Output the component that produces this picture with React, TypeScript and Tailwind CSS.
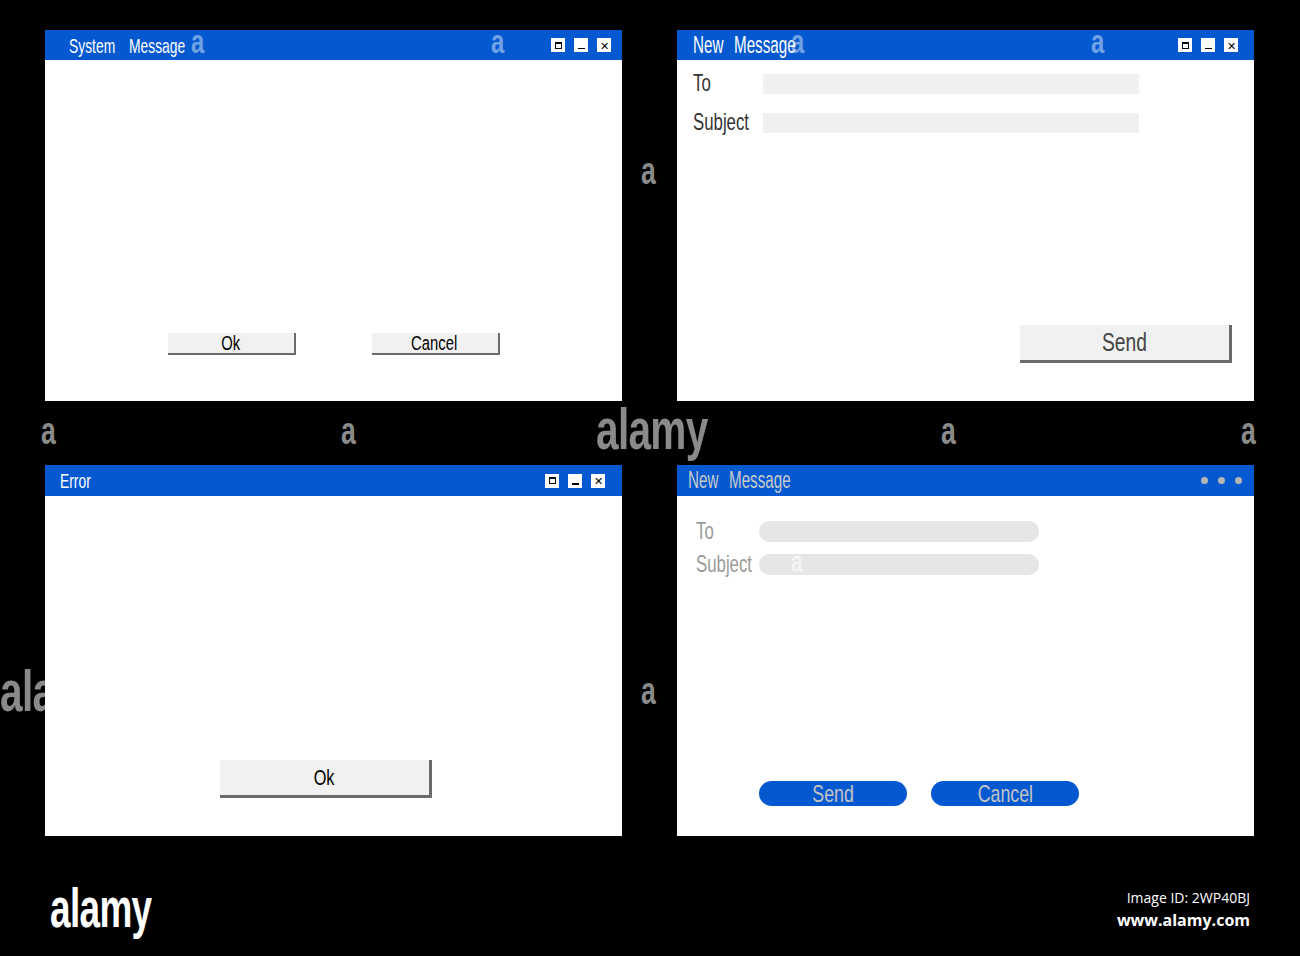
const sans = "font-['Liberation_Sans','Arial',sans-serif]";

// condensed look: Liberation Sans squeezed horizontally
function N({
  children,
  className = "",
  origin = "origin-left",
  scale = "scale-x-[0.74]",
}: {
  children: React.ReactNode;
  className?: string;
  origin?: string;
  scale?: string;
}) {
  return <span className={`inline-block whitespace-pre ${sans} ${scale} ${origin} ${className}`}>{children}</span>;
}

function Title({ first, second, firstW, cls }: { first: string; second?: string; firstW?: string; cls: string }) {
  return (
    <div className="flex">
      <N scale="scale-x-[0.66]" className={`${firstW ?? ""} leading-none ${cls}`}>
        {first}
      </N>
      {second && (
        <N scale="scale-x-[0.66]" className={`leading-none ${cls}`}>
          {second}
        </N>
      )}
    </div>
  );
}

function TitleButtons() {
  return (
    <div className="flex items-center gap-[9px]">
      <span className="flex h-[14px] w-[14px] items-center justify-center bg-white">
        <span className="h-[7px] w-[7px] border-[1.5px] border-t-[2.5px] border-black" />
      </span>
      <span className="flex h-[14px] w-[14px] items-end justify-center bg-white pb-[3px]">
        <span className="h-[1.5px] w-[7px] bg-black" />
      </span>
      <span className="flex h-[14px] w-[14px] items-center justify-center bg-white text-[11px] leading-none text-black">
        ✕
      </span>
    </div>
  );
}

function FlatButton({ label, className, text }: { label: string; className: string; text: string }) {
  return (
    <div className={`flex items-center justify-center bg-[#f1f1f1] border-[#6b6b6b] ${className}`}>
      <N origin="origin-center" className={text}>
        {label}
      </N>
    </div>
  );
}

function Wm({ className, label = "a" }: { className: string; label?: string }) {
  return (
    <span
      className={`pointer-events-none absolute inline-block origin-left scale-x-[0.7] ${sans} font-bold leading-none ${className}`}
    >
      {label}
    </span>
  );
}

function Field({ label, labelW, labelCls, barCls, rowH }: { label: string; labelW: string; labelCls: string; barCls: string; rowH: string }) {
  return (
    <div className={`flex items-center ${rowH}`}>
      <div className={labelW}>
        <N scale="scale-x-[0.7]" className={`leading-none ${labelCls}`}>
          {label}
        </N>
      </div>
      <div className={barCls} />
    </div>
  );
}

export default function App() {
  return (
    <div className="relative h-[956px] w-[1300px] overflow-hidden bg-black">
      <div className="absolute left-0 top-[662px] w-[45px] overflow-hidden">
        <span className={`inline-block origin-left scale-x-[0.7] ${sans} text-[58px] font-bold leading-none tracking-[-1px] text-[#8a8a8a]`}>
          alam
        </span>
      </div>

      <div className="relative grid grid-cols-[577px_577px] gap-x-[55px] gap-y-[64px] pl-[45px] pt-[30px]">
        {/* System Message */}
        <div className="flex h-[371px] flex-col bg-white">
          <div className="flex h-[30px] items-center justify-between bg-[#0459d1] pl-[24px] pr-[11px]">
            <Title first="System" second="Message" firstW="w-[60px]" cls="text-[21px] text-white" />
            <TitleButtons />
          </div>
          <div className="flex flex-1 items-end justify-center gap-[76px] pb-[46px]">
            <FlatButton label="Ok" className="h-[22px] w-[128px] border-r-2 border-b-2" text="text-[20px] text-black" />
            <FlatButton label="Cancel" className="h-[22px] w-[128px] border-r-2 border-b-2" text="text-[20px] text-black" />
          </div>
        </div>

        {/* New Message */}
        <div className="flex h-[371px] flex-col bg-white">
          <div className="flex h-[30px] items-center justify-between bg-[#0459d1] pl-[16px] pr-[16px]">
            <Title first="New" second="Message" firstW="w-[41px]" cls="text-[23px] text-white" />
            <TitleButtons />
          </div>
          <div className="flex flex-1 flex-col pl-[16px] pr-[22px] pt-[14px] pb-[38px]">
            <div className="flex flex-col gap-[19px]">
              <Field label="To" rowH="h-[20px]" labelW="w-[70px]" labelCls="text-[24px] text-[#333]" barCls="h-[20px] w-[376px] bg-[#f0f0f0]" />
              <Field label="Subject" rowH="h-[20px]" labelW="w-[70px]" labelCls="text-[24px] text-[#333]" barCls="h-[20px] w-[376px] bg-[#f0f0f0]" />
            </div>
            <div className="mt-auto flex justify-end">
              <FlatButton label="Send" className="h-[38px] w-[212px] border-r-[3px] border-b-[3px]" text="text-[26px] text-[#444]" />
            </div>
          </div>
        </div>

        {/* Error */}
        <div className="flex h-[371px] flex-col bg-white">
          <div className="flex h-[31px] items-center justify-between bg-[#0459d1] pl-[15px] pr-[17px]">
            <Title first="Error" cls="text-[21px] text-white" />
            <TitleButtons />
          </div>
          <div className="flex flex-1 items-end pb-[38px] pl-[175px]">
            <FlatButton label="Ok" className="h-[38px] w-[212px] border-r-[3px] border-b-[3px]" text="text-[22px] text-black" />
          </div>
        </div>

        {/* New Message (rounded) */}
        <div className="flex h-[371px] flex-col bg-white">
          <div className="flex h-[31px] items-center justify-between bg-[#0459d1] pl-[11px] pr-[12px]">
            <Title first="New" second="Message" firstW="w-[41px]" cls="text-[23px] text-[#c9c9c9]" />
            <div className="flex gap-[10px]">
              <span className="h-[7px] w-[7px] rounded-full bg-[#b5b5b5]" />
              <span className="h-[7px] w-[7px] rounded-full bg-[#b5b5b5]" />
              <span className="h-[7px] w-[7px] rounded-full bg-[#b5b5b5]" />
            </div>
          </div>
          <div className="flex flex-1 flex-col pl-[19px] pt-[25px] pb-[30px]">
            <div className="flex flex-col gap-[12px]">
              <Field label="To" rowH="h-[21px]" labelW="w-[63px]" labelCls="text-[24px] text-[#9a9a9a]" barCls="h-[21px] w-[280px] rounded-full bg-[#e6e6e6]" />
              <Field label="Subject" rowH="h-[21px]" labelW="w-[63px]" labelCls="text-[24px] text-[#9a9a9a]" barCls="h-[21px] w-[280px] rounded-full bg-[#e6e6e6]" />
            </div>
            <div className="mt-auto flex gap-[24px] pl-[63px]">
              <div className="flex h-[25px] w-[148px] items-center justify-center rounded-full bg-[#0459d1]">
                <N origin="origin-center" className="text-[24px] leading-none text-[#c4c4c4]">Send</N>
              </div>
              <div className="flex h-[25px] w-[148px] items-center justify-center rounded-full bg-[#0459d1]">
                <N origin="origin-center" className="text-[24px] leading-none text-[#c4c4c4]">Cancel</N>
              </div>
            </div>
          </div>
        </div>
      </div>

      {/* footer */}
      <div className="flex items-start justify-between pl-[50px] pr-[50px] pt-[44px]">
        <span className={`inline-block origin-left scale-x-[0.66] ${sans} text-[56px] font-bold leading-none tracking-[-1px] text-white`}>
          alamy
        </span>
        <div className="flex flex-col items-end pt-[7px] font-['Open_Sans',sans-serif] text-white">
          <span className="text-[14px] leading-[22px]">Image ID: 2WP40BJ</span>
          <span className="text-[16px] font-bold leading-[22px]">www.alamy.com</span>
        </div>
      </div>

      {/* watermarks */}
      <Wm label="alamy" className="left-[596px] top-[400px] text-[58px] tracking-[-1px] text-[#8a8a8a]" />
      <Wm className="left-[41px] top-[412px] text-[38px] text-[#8a8a8a]" />
      <Wm className="left-[341px] top-[412px] text-[38px] text-[#8a8a8a]" />
      <Wm className="left-[941px] top-[412px] text-[38px] text-[#8a8a8a]" />
      <Wm className="left-[1241px] top-[412px] text-[38px] text-[#8a8a8a]" />
      <Wm className="left-[641px] top-[152px] text-[38px] text-[#8a8a8a]" />
      <Wm className="left-[641px] top-[672px] text-[38px] text-[#8a8a8a]" />
      <Wm className="left-[191px] top-[24px] text-[34px] text-white/45" />
      <Wm className="left-[491px] top-[24px] text-[34px] text-white/45" />
      <Wm className="left-[791px] top-[24px] text-[34px] text-white/45" />
      <Wm className="left-[1091px] top-[24px] text-[34px] text-white/45" />
      <Wm className="left-[791px] top-[547px] text-[30px] text-white/60" />
    </div>
  );
}
